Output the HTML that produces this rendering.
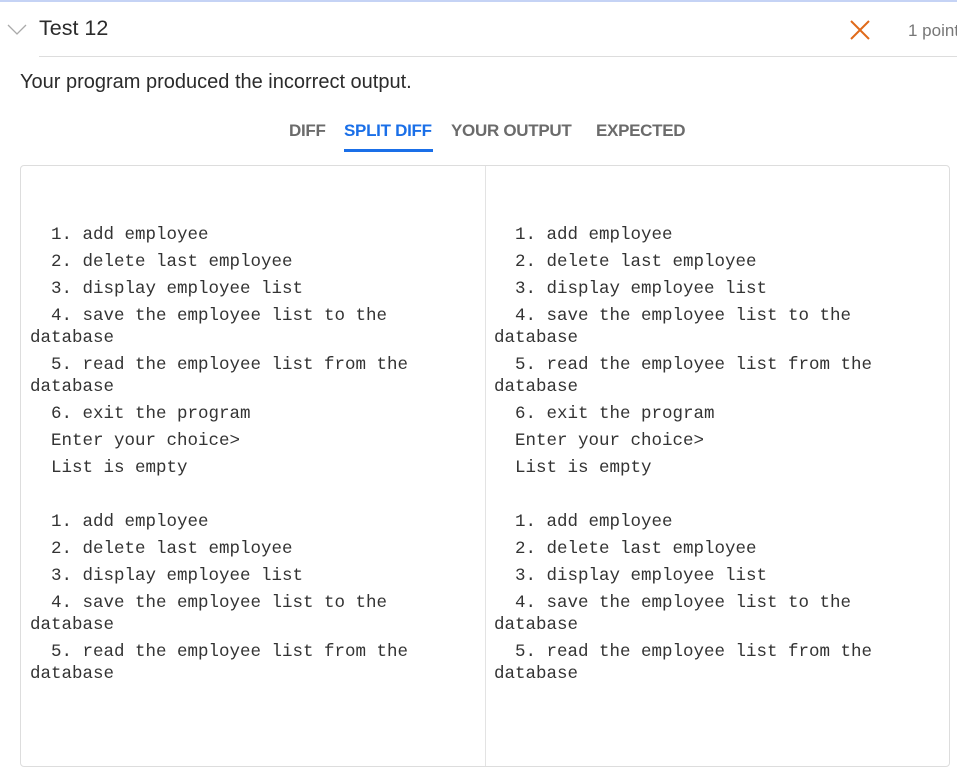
<!DOCTYPE html>
<html><head><meta charset="utf-8"><style>
body{margin:0;width:957px;height:687px;overflow:hidden;background:#fff;font-family:"Liberation Sans",sans-serif;position:relative}
.topbar{position:absolute;left:0;top:0;width:957px;height:2px;background:#c5d3f5}
.title{position:absolute;left:39px;top:16px;font-size:21.5px;color:#2b2b2b}
.hr{position:absolute;left:39px;top:56px;width:918px;height:1px;background:#ddd}
.msg{position:absolute;left:20px;top:71px;font-size:20px;color:#2b2b2b}
.tab{position:absolute;top:121px;font-size:17px;font-weight:bold;color:#6b6b6b;letter-spacing:-0.3px}
.panel{position:absolute;left:20px;top:165px;width:928px;height:600px;border:1px solid #ddd;border-radius:4px}
.div{position:absolute;left:485px;top:166px;width:1px;height:600px;background:#e3e3e3}
.col{position:absolute;top:224px;width:460px;font-family:"Liberation Mono",monospace;font-size:17.5px;color:#333}
.col div{line-height:22px;margin-bottom:5px;white-space:pre;min-height:22px}
</style></head><body>
<div class="topbar"></div>
<svg style="position:absolute;left:7px;top:24px" width="20" height="12"><path d="M1 1 L10 10 L19 1" fill="none" stroke="#aaa" stroke-width="1.3"/></svg>
<div class="title">Test 12</div>
<svg style="position:absolute;left:850px;top:20px" width="20" height="20"><path d="M1 1L19 19M19 1L1 19" stroke="#e06a1a" stroke-width="2"/></svg>
<div style="position:absolute;left:908px;top:21px;font-size:17px;color:#777;white-space:nowrap">1 point</div>
<div class="hr"></div>
<div class="msg">Your program produced the incorrect output.</div>
<div class="tab" style="left:289px">DIFF</div>
<div class="tab" style="left:344px;color:#1a6fe8">SPLIT DIFF</div>
<div style="position:absolute;left:344px;top:149px;width:89px;height:3px;background:#1a6fe8"></div>
<div class="tab" style="left:451px">YOUR OUTPUT</div>
<div class="tab" style="left:596px">EXPECTED</div>
<div class="panel"></div>
<div class="div"></div>
<div class="col" style="left:30px"><div>  1. add employee</div><div>  2. delete last employee</div><div>  3. display employee list</div><div>  4. save the employee list to the
database</div><div>  5. read the employee list from the
database</div><div>  6. exit the program</div><div>  Enter your choice></div><div>  List is empty</div><div> </div><div>  1. add employee</div><div>  2. delete last employee</div><div>  3. display employee list</div><div>  4. save the employee list to the
database</div><div>  5. read the employee list from the
database</div></div>
<div class="col" style="left:494px"><div>  1. add employee</div><div>  2. delete last employee</div><div>  3. display employee list</div><div>  4. save the employee list to the
database</div><div>  5. read the employee list from the
database</div><div>  6. exit the program</div><div>  Enter your choice></div><div>  List is empty</div><div> </div><div>  1. add employee</div><div>  2. delete last employee</div><div>  3. display employee list</div><div>  4. save the employee list to the
database</div><div>  5. read the employee list from the
database</div></div>
</body></html>
